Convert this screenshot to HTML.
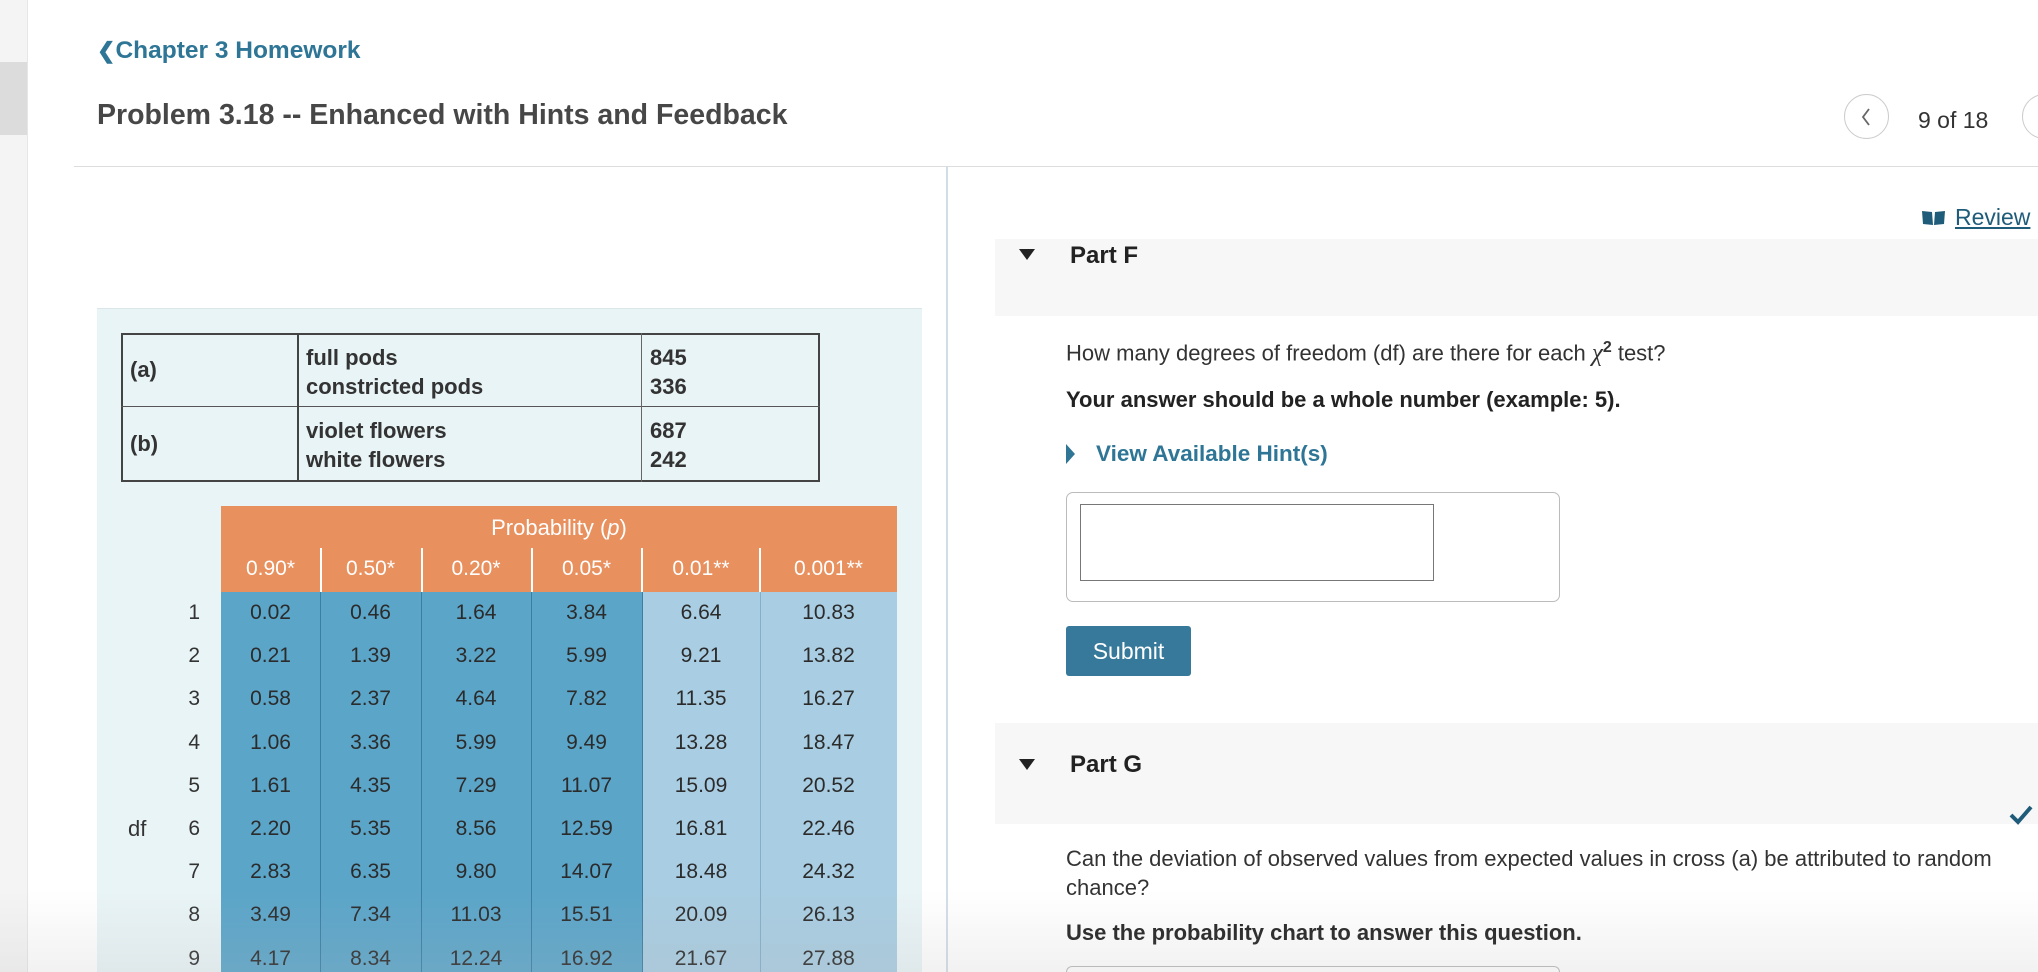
<!DOCTYPE html>
<html style="overflow:hidden;height:972px"><head><meta charset="utf-8">
<style>
*{margin:0;padding:0;box-sizing:border-box}
html,body{width:2038px;height:972px;overflow:hidden}
body{background:#fff;font-family:"Liberation Sans",Arial,sans-serif;position:relative;color:#333}
.a{position:absolute;white-space:nowrap}
.c{text-align:center}
</style></head><body>
<div class="a" style="left:0;top:0;width:28px;height:972px;background:#f4f4f4;border-right:1px solid #e6e6e6"></div>
<div class="a" style="left:0;top:62px;width:27px;height:73px;background:#dcdcdc"></div>

<div class="a" style="left:97px;top:37px;font-size:24.5px;font-weight:bold;color:#2e7596"><span style="font-size:22px">&#10094;</span>Chapter 3 Homework</div>
<div class="a" style="left:97px;top:99px;font-size:28.5px;font-weight:bold;color:#474747">Problem 3.18 -- Enhanced with Hints and Feedback</div>

<div class="a" style="left:1844px;top:94px;width:45px;height:45px;border:1px solid #ccc;border-radius:50%"></div>
<svg class="a" style="left:1858px;top:106px" width="16" height="22"><path d="M11 3 L5 11 L11 19" fill="none" stroke="#666" stroke-width="1.8"/></svg>
<div class="a" style="left:1918px;top:107px;font-size:23px;color:#333">9 of 18</div>
<div class="a" style="left:2022px;top:94px;width:45px;height:45px;border:1px solid #ccc;border-radius:50%"></div>

<div class="a" style="left:74px;top:166px;width:1964px;height:1px;background:#ddd"></div>
<div class="a" style="left:946px;top:166px;width:2px;height:806px;background:#d3dde6"></div>

<div class="a" style="left:97px;top:308px;width:825px;height:664px;background:#e9f4f6;border-top:1px solid #dbe6e8"></div>
<div class="a" style="left:121px;top:333px;width:699px;height:149px;border:2px solid #444"></div>
<div class="a" style="left:121px;top:406px;width:699px;height:1px;background:#555"></div>
<div class="a" style="left:297px;top:333px;width:2px;height:149px;background:#444"></div>
<div class="a" style="left:641px;top:333px;width:1px;height:149px;background:#666"></div>
<div class="a" style="left:130px;top:357px;font-size:22px;font-weight:bold;color:#333">(a)</div>
<div class="a" style="left:130px;top:431px;font-size:22px;font-weight:bold;color:#333">(b)</div>
<div class="a" style="left:306px;top:343px;font-size:22px;line-height:29px;font-weight:bold;color:#333">full pods<br>constricted pods</div>
<div class="a" style="left:306px;top:416px;font-size:22px;line-height:29px;font-weight:bold;color:#333">violet flowers<br>white flowers</div>
<div class="a" style="left:650px;top:343px;font-size:22px;line-height:29px;font-weight:bold;color:#333">845<br>336</div>
<div class="a" style="left:650px;top:416px;font-size:22px;line-height:29px;font-weight:bold;color:#333">687<br>242</div>

<div class="a" style="left:221px;top:506px;width:676px;height:86px;background:#e8905e"></div>
<div class="a c" style="left:221px;top:515px;width:676px;font-size:22px;color:#fff">Probability (<i>p</i>)</div>
<div class="a" style="left:221px;top:592px;width:421px;height:380px;background:#5ba5c9"></div>
<div class="a" style="left:642px;top:592px;width:255px;height:380px;background:#a9cde2"></div>
<div class="a" style="left:320px;top:548px;width:2px;height:44px;background:#fff"></div>
<div class="a" style="left:421px;top:548px;width:2px;height:44px;background:#fff"></div>
<div class="a" style="left:531px;top:548px;width:2px;height:44px;background:#fff"></div>
<div class="a" style="left:641px;top:548px;width:2px;height:44px;background:#fff"></div>
<div class="a" style="left:759px;top:548px;width:2px;height:44px;background:#fff"></div>
<div class="a" style="left:320px;top:592px;width:1px;height:380px;background:#3b7da3"></div>
<div class="a" style="left:421px;top:592px;width:1px;height:380px;background:#3b7da3"></div>
<div class="a" style="left:531px;top:592px;width:1px;height:380px;background:#3b7da3"></div>
<div class="a" style="left:642px;top:592px;width:1px;height:380px;background:#3b7da3"></div>
<div class="a" style="left:760px;top:592px;width:1px;height:380px;background:#86adc6"></div>
<div id="hdr"></div>
<div class="a" style="left:128px;top:816px;font-size:22px;color:#333">df</div>
<div id="rows"></div>

<svg class="a" style="left:1922px;top:210px" width="24" height="16"><path d="M0 1 L10 2 L11 15 L1 14Z M23 1 L13 2 L12 15 L22 14Z" fill="#1f5c7a"/></svg>
<div class="a" style="left:1955px;top:204px;font-size:23px;color:#1f5c7a;text-decoration:underline">Review</div>

<div class="a" style="left:995px;top:239px;width:1043px;height:77px;background:#f7f7f7"></div>
<svg class="a" style="left:1019px;top:249px" width="16" height="12"><path d="M0 0 L16 0 L8 11Z" fill="#222"/></svg>
<div class="a" style="left:1070px;top:242px;font-size:24px;font-weight:bold;color:#222">Part F</div>

<div class="a" style="left:1066px;top:339px;font-size:22px;color:#333">How many degrees of freedom (df) are there for each <span style="font-family:'Liberation Serif',serif;font-style:italic;font-size:25px">χ</span><sup style="font-weight:bold;font-size:16px">2</sup> test?</div>
<div class="a" style="left:1066px;top:387px;font-size:22px;font-weight:bold;color:#222">Your answer should be a whole number (example: 5).</div>
<svg class="a" style="left:1066px;top:444px" width="10" height="20"><path d="M0 0 L9 10 L0 20Z" fill="#2e7596"/></svg>
<div class="a" style="left:1096px;top:441px;font-size:22.5px;font-weight:bold;color:#2e7596">View Available Hint(s)</div>

<div class="a" style="left:1066px;top:492px;width:494px;height:110px;border:1px solid #bbb;border-radius:7px"></div>
<div class="a" style="left:1080px;top:504px;width:354px;height:77px;border:1px solid #777"></div>
<div class="a c" style="left:1066px;top:626px;width:125px;height:50px;background:#36799b;border-radius:3px;color:#fff;font-size:23px;line-height:50px">Submit</div>

<div class="a" style="left:995px;top:723px;width:1043px;height:101px;background:#f7f7f7"></div>
<svg class="a" style="left:1019px;top:759px" width="16" height="12"><path d="M0 0 L16 0 L8 11Z" fill="#222"/></svg>
<div class="a" style="left:1070px;top:751px;font-size:24px;font-weight:bold;color:#222">Part G</div>
<svg class="a" style="left:2009px;top:805px" width="24" height="20"><path d="M2 10 L9 17 L22 2" fill="none" stroke="#1f5c7a" stroke-width="4"/></svg>

<div class="a" style="left:1066px;top:844px;font-size:22px;line-height:29px;color:#333">Can the deviation of observed values from expected values in cross (a) be attributed to random<br>chance?</div>
<div class="a" style="left:1066px;top:920px;font-size:22px;font-weight:bold;color:#222">Use the probability chart to answer this question.</div>
<div class="a" style="left:1066px;top:966px;width:494px;height:6px;border:1px solid #bbb;border-bottom:none;border-radius:7px 7px 0 0"></div>

<div class="a" style="left:0;top:890px;width:2038px;height:82px;background:linear-gradient(rgba(180,180,180,0),rgba(180,180,180,0.18))"></div>

<script>
var cols=[[221,320],[320,421],[421,531],[531,642],[642,760],[760,897]];
var hd=["0.90*","0.50*","0.20*","0.05*","0.01**","0.001**"];
var h="";
for(var i=0;i<6;i++)h+='<div class="a c" style="left:'+cols[i][0]+'px;top:557px;width:'+(cols[i][1]-cols[i][0])+'px;font-size:21px;color:#fff">'+hd[i]+'</div>';
document.getElementById("hdr").outerHTML=h;
var d=[["0.02","0.46","1.64","3.84","6.64","10.83"],["0.21","1.39","3.22","5.99","9.21","13.82"],["0.58","2.37","4.64","7.82","11.35","16.27"],["1.06","3.36","5.99","9.49","13.28","18.47"],["1.61","4.35","7.29","11.07","15.09","20.52"],["2.20","5.35","8.56","12.59","16.81","22.46"],["2.83","6.35","9.80","14.07","18.48","24.32"],["3.49","7.34","11.03","15.51","20.09","26.13"],["4.17","8.34","12.24","16.92","21.67","27.88"]];
var r="";
for(var j=0;j<9;j++){var y=613+j*43.2-12;
r+='<div class="a" style="left:170px;top:'+y+'px;width:30px;text-align:right;font-size:21px;color:#333">'+(j+1)+'</div>';
for(var i=0;i<6;i++){r+='<div class="a c" style="left:'+cols[i][0]+'px;top:'+y+'px;width:'+(cols[i][1]-cols[i][0])+'px;font-size:21px;color:#2b2b2b">'+d[j][i]+'</div>';}}
document.getElementById("rows").outerHTML=r;
</script>
</body></html>
